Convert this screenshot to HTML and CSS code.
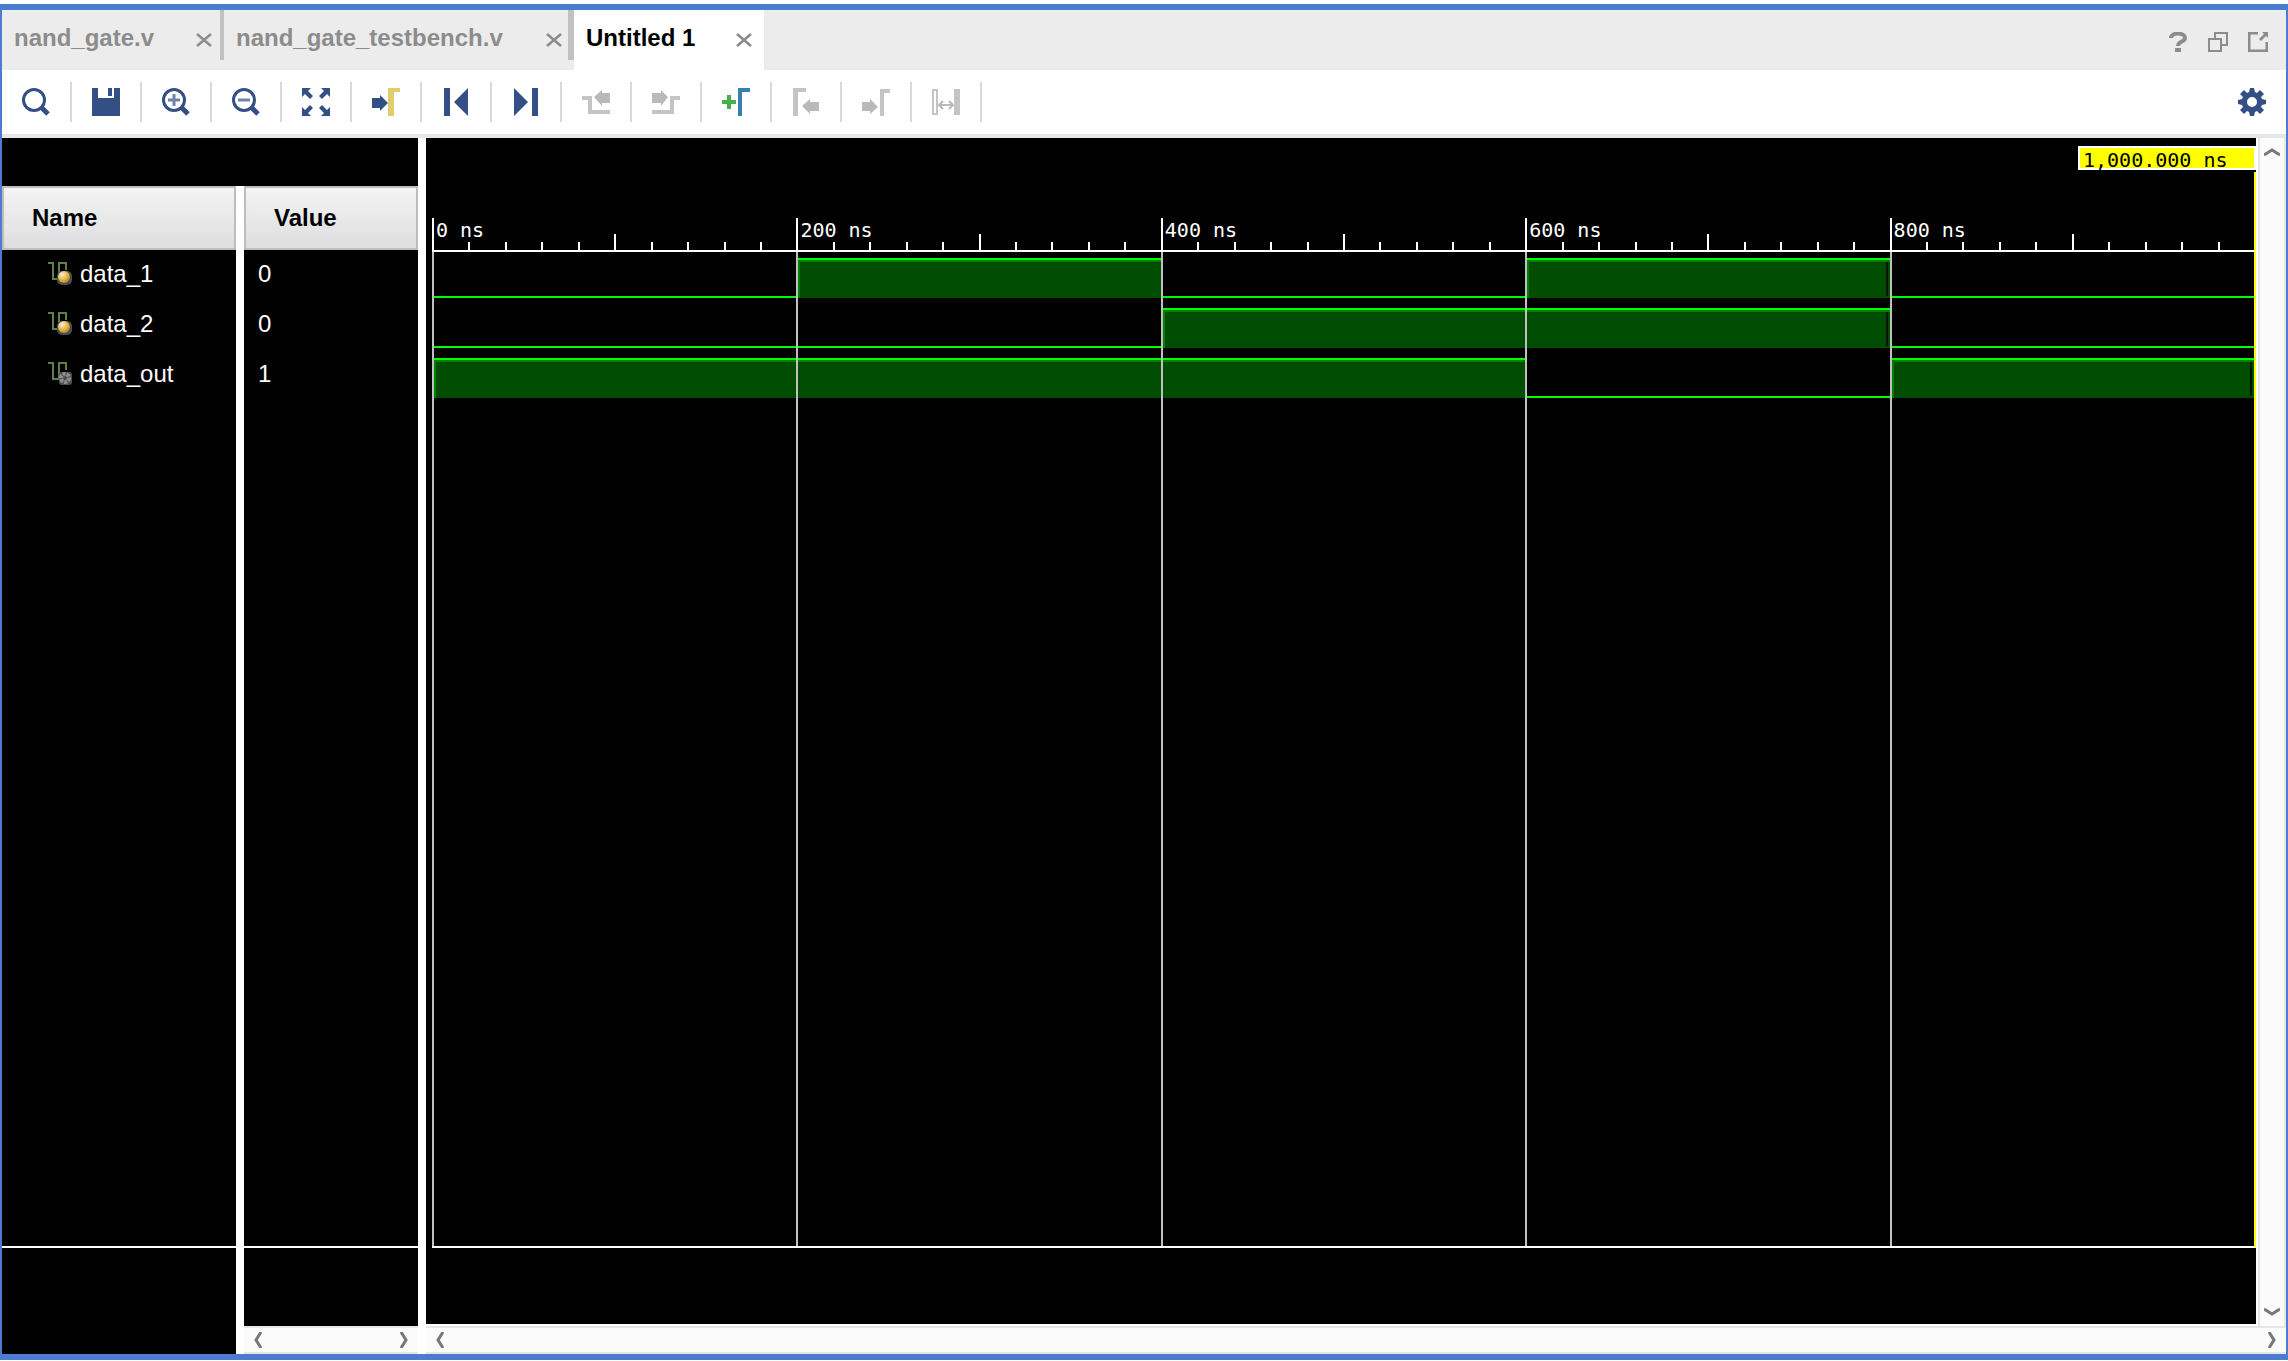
FILE: index.html
```html
<!DOCTYPE html>
<html lang="en">
<head>
  <meta charset="UTF-8">
  <meta name="viewport" content="width=device-width, initial-scale=1.0">
  <title>Untitled 1</title>
  <link rel="stylesheet" href="styles.css">
</head>
<body>
  <svg class="defs" aria-hidden="true">
    <symbol id="close" viewBox="0 0 16 16"><path d="M1 2L15 14M15 2L1 14" fill="none" stroke="#8c8c8c" stroke-width="2.6"/></symbol>
    <symbol id="signal" viewBox="0 0 24 24">
      <path d="M0 1H6M5 1V18M5 17H10M11 18V1H18V8" fill="none" stroke="#5c7f4c" stroke-width="2"/>
    </symbol>
    <symbol id="input" viewBox="0 0 24 24">
      <use href="#signal"/>
      <rect x="9" y="9" width="15" height="14" rx="5" fill="#4d4d4d"/>
      <circle cx="16" cy="15" r="6" fill="url(#gold)"/>
    </symbol>
    <symbol id="output" viewBox="0 0 24 24">
      <use href="#signal"/>
      <rect x="11" y="10" width="13" height="13" rx="3" fill="#4d4d4d"/>
      <circle cx="17" cy="16" r="4" fill="none" stroke="#8f8f8f" stroke-width="4" stroke-dasharray="3 1"/>
    </symbol>
    <symbol id="left" viewBox="0 0 8 16"><path d="M7 0L2 8L7 16" fill="none" stroke="#787878" stroke-width="3"/></symbol>
    <symbol id="right" viewBox="0 0 8 16"><path d="M1 0L6 8L1 16" fill="none" stroke="#787878" stroke-width="3"/></symbol>
    <symbol id="up" viewBox="0 0 16 8"><path d="M0 7L8 2L16 7" fill="none" stroke="#787878" stroke-width="3"/></symbol>
    <symbol id="down" viewBox="0 0 16 8"><path d="M0 1L8 6L16 1" fill="none" stroke="#787878" stroke-width="3"/></symbol>
    <radialGradient id="gold" cx="0.35" cy="0.3" r="0.8"><stop offset="0" stop-color="#f4efdc"/><stop offset="0.6" stop-color="#e3b030"/><stop offset="1" stop-color="#8f7c50"/></radialGradient>
  </svg>

  <div class="window">
    <nav class="tabs">
      <div class="tab">
        <a href="#">nand_gate.v</a>
        <button aria-label="Close nand_gate.v"><svg class="x"><use href="#close"/></svg></button>
      </div>
      <div class="tab tab-wide">
        <a href="#">nand_gate_testbench.v</a>
        <button aria-label="Close nand_gate_testbench.v"><svg class="x"><use href="#close"/></svg></button>
      </div>
      <div class="tab active">
        <a href="#">Untitled 1</a>
        <button aria-label="Close Untitled 1"><svg class="x"><use href="#close"/></svg></button>
      </div>
      <div class="window-buttons">
        <button aria-label="Help"><svg viewBox="0 0 20 20"><path d="M3 6C3 0 17 0 17 6C17 10 10 9 10 14" fill="none" stroke="#8c8c8c" stroke-width="4"/><path d="M7 16h6v4H7z" fill="#8c8c8c"/></svg></button>
        <button aria-label="Restore"><svg viewBox="0 0 20 20"><path d="M7 6V1H19V13H14M1 7H13V19H1Z" fill="none" stroke="#8c8c8c" stroke-width="2"/></svg></button>
        <button aria-label="Float"><svg viewBox="0 0 20 20"><path d="M10 1H1V19H19V10" fill="none" stroke="#8c8c8c" stroke-width="3"/><path d="M14 0H20V6L18 4L13 9L11 7L16 2Z" fill="#8c8c8c"/></svg></button>
      </div>
    </nav>

    <div class="toolbar">
      <button aria-label="Find"><svg viewBox="0 0 28 28"><circle cx="12" cy="12" r="10.5" fill="none" stroke="#334f85" stroke-width="3"/><path d="M19 19L26 26" stroke="#334f85" stroke-width="5"/></svg></button>
      <button aria-label="Save"><svg viewBox="0 0 28 28"><path d="M0 0H6V10H22V0H28V28H0ZM16 0H20V8H16Z" fill="#334f85"/></svg></button>
      <button aria-label="Zoom in"><svg viewBox="0 0 28 28"><circle cx="12" cy="12" r="10.5" fill="none" stroke="#334f85" stroke-width="3"/><path d="M19 19L26 26" stroke="#334f85" stroke-width="5"/><path d="M6 12H18M12 6V18" stroke="#6f84aa" stroke-width="3"/></svg></button>
      <button aria-label="Zoom out"><svg viewBox="0 0 28 28"><circle cx="12" cy="12" r="10.5" fill="none" stroke="#334f85" stroke-width="3"/><path d="M19 19L26 26" stroke="#334f85" stroke-width="5"/><path d="M6 12H18" stroke="#6f84aa" stroke-width="3"/></svg></button>
      <button aria-label="Zoom fit"><svg viewBox="0 0 28 28"><path id="corner" d="M0 0H9L6 3L11 8L8 11L3 6L0 9Z" fill="#334f85"/><use href="#corner" transform="rotate(90 14 14)"/><use href="#corner" transform="rotate(180 14 14)"/><use href="#corner" transform="rotate(270 14 14)"/></svg></button>
      <button aria-label="Go to cursor"><svg viewBox="0 0 28 28"><path d="M0 10H8V7L16 15L8 23V20H0Z" fill="#334f85"/><path d="M16 0H28V4H22V28H16Z" fill="#e2cd6d"/></svg></button>
      <button aria-label="Go to start"><svg viewBox="0 0 28 28"><path d="M2 0H8V28H2ZM26 0V28L12 14Z" fill="#334f85"/></svg></button>
      <button aria-label="Go to end"><svg viewBox="0 0 28 28"><path d="M2 0V28L16 14ZM20 0H26V28H20Z" fill="#334f85"/></svg></button>
      <button aria-label="Previous transition" disabled><svg viewBox="0 0 28 28"><path d="M0 8H10V22H28V26H6V12H0Z" fill="#c4c4c4"/><path d="M12 9L20 2V5H28V15H20V18Z" fill="#b9b9b9"/></svg></button>
      <button aria-label="Next transition" disabled><svg viewBox="0 0 28 28"><path d="M28 8H18V22H0V26H22V12H28Z" fill="#c4c4c4"/><path d="M16 9L9 2V5H0V15H9V18Z" fill="#b9b9b9"/></svg></button>
      <button aria-label="Add marker"><svg viewBox="0 0 28 28"><path d="M5 7H9V12H14V16H9V21H5V16H0V12H5Z" fill="#43b049"/><path d="M16 0H28V4H20V28H16Z" fill="#3a7fb1"/></svg></button>
      <button aria-label="Previous marker" disabled><svg viewBox="0 0 28 28"><path d="M1 0H14V4H6V28H1Z" fill="#c4c4c4"/><path d="M10 18L18 11V14H27V23H18V26Z" fill="#b9b9b9"/></svg></button>
      <button aria-label="Next marker" disabled><svg viewBox="0 0 28 28"><path d="M0 14H8V11L16 19L8 26V23H0Z" fill="#b9b9b9"/><path d="M18 1H28V5H22V28H18Z" fill="#c4c4c4"/></svg></button>
      <button aria-label="Swap cursors" disabled><svg viewBox="0 0 28 28"><path d="M1 2H5V26H1Z" fill="none" stroke="#c4c4c4" stroke-width="2"/><path d="M22 1H28V27H22Z" fill="#c4c4c4"/><path d="M7 17H21M11 13L7 17L11 21M17 13L21 17L17 21" fill="none" stroke="#b9b9b9" stroke-width="2"/></svg></button>
      <button class="settings" aria-label="Settings"><svg viewBox="0 0 28 28"><path d="M12 0H16L17 4L19 5L22 2L26 6L23 9L24 11L28 12V16L24 17L23 19L26 22L22 26L19 23L17 24L16 28H12L11 24L9 23L6 26L2 22L5 19L4 17L0 16V12L4 11L5 9L2 6L6 2L9 5L11 4ZM14 9A5 5 0 1 0 14 19A5 5 0 1 0 14 9Z" fill="#334f85" fill-rule="evenodd"/></svg></button>
    </div>

    <main class="viewer">
      <section class="signals">
        <div class="column names">
          <h2>Name</h2>
          <ul>
            <li><svg class="sig"><use href="#input"/></svg>data_1</li>
            <li><svg class="sig"><use href="#input"/></svg>data_2</li>
            <li><svg class="sig"><use href="#output"/></svg>data_out</li>
          </ul>
          <div class="below"></div>
        </div>
        <div class="column values">
          <h2>Value</h2>
          <ul>
            <li>0</li>
            <li>0</li>
            <li>1</li>
          </ul>
          <div class="below"></div>
          <div class="scroll-x">
            <button aria-label="Scroll values left"><svg class="arrow-x"><use href="#left"/></svg></button>
            <button aria-label="Scroll values right"><svg class="arrow-x"><use href="#right"/></svg></button>
          </div>
        </div>
      </section>

      <section class="waves">
        <div class="canvas">
          <div class="marker-row"><span class="marker">1,000.000 ns</span></div>
          <div class="ruler" id="ruler"></div>
          <div class="plot">
            <div class="wave" data-levels="01010"></div>
            <div class="wave" data-levels="00110"></div>
            <div class="wave" data-levels="11101"></div>
            <div class="grid"><i></i><i></i><i></i><i></i><i></i></div>
          </div>
          <div class="below"></div>
        </div>
        <div class="scroll-y">
          <button aria-label="Scroll up"><svg class="arrow-y"><use href="#up"/></svg></button>
          <button aria-label="Scroll down"><svg class="arrow-y"><use href="#down"/></svg></button>
        </div>
        <div class="scroll-x">
          <button aria-label="Scroll left"><svg class="arrow-x"><use href="#left"/></svg></button>
          <button aria-label="Scroll right"><svg class="arrow-x"><use href="#right"/></svg></button>
        </div>
      </section>
    </main>
  </div>

  <script src="script.js"></script>
</body>
</html>
```
FILE: styles.css
```css
* {
  box-sizing: border-box;
}

body {
  margin: 0;
  padding: 4px 0 1px;
  height: 100vh;
  background-color: #fff;
  color: #000;
  font-family: "Liberation Sans", Arial, sans-serif;
  font-size: 24px;
  line-height: 30px;
}

h2, ul {
  margin: 0;
  padding: 0;
  list-style: none;
}

button {
  display: flex;
  align-items: center;
  justify-content: center;
  padding: 0;
  border: none;
  background: none;
}

svg {
  display: block;
}

.defs {
  position: absolute;
  width: 0;
  height: 0;
}

.window {
  display: flex;
  flex-direction: column;
  height: 100%;
  border: 2px solid #4a7dce;
  border-width: 6px 2px;
}

/* tabs */
.tabs {
  display: flex;
  height: 60px;
  background-color: #ececec;
}

.tab {
  display: flex;
  justify-content: space-between;
  width: 222px;
  height: 50px;
  padding: 0 8px 0 12px;
  border-right: 4px solid #c1c1c1;
}

.tab-wide {
  width: 350px;
  padding-right: 6px;
  border-right-width: 6px;
}

.tab a {
  padding-top: 13px;
  color: #8c8c8c;
  font-weight: bold;
  line-height: 30px;
  text-decoration: none;
}

.tab button {
  height: 50px;
  padding-top: 10px;
}

.tab.active {
  width: 190px;
  height: 60px;
  padding-right: 12px;
  border-right: none;
  background-color: #fff;
}

.tab.active a {
  color: #000;
}

.x {
  width: 16px;
  height: 16px;
}

.window-buttons {
  display: flex;
  gap: 20px;
  margin-left: auto;
  padding: 4px 18px 0 0;
}

.window-buttons svg {
  width: 20px;
  height: 20px;
}

/* toolbar */
.toolbar {
  display: flex;
  align-items: center;
  height: 68px;
  border-bottom: 4px solid #e6e6e6;
}

.toolbar button {
  width: 70px;
  height: 40px;
  border-right: 2px solid #d8d8d8;
}

.toolbar svg {
  width: 28px;
  height: 28px;
}

.toolbar .settings {
  margin-left: auto;
  width: 68px;
  border-right: none;
}

/* signal list */
.viewer {
  display: flex;
  flex: 1;
  gap: 8px;
  min-height: 0;
}

.signals {
  display: flex;
  width: 416px;
  padding-top: 48px;
  background: linear-gradient(#000 48px, #fff 48px);
  gap: 8px;
}

.column {
  display: flex;
  flex-direction: column;
  width: 234px;
  background-color: #000;
  color: #fff;
}

.values {
  width: 174px;
}

.column h2 {
  height: 64px;
  padding-left: 28px;
  border: 2px solid #bdbdbd;
  background: linear-gradient(#f4f4f4, #dedee0);
  color: #000;
  font-size: 24px;
  line-height: 60px;
}

.column ul {
  flex: 1;
  border-bottom: 2px solid #fff;
}

.column li {
  display: flex;
  align-items: center;
  gap: 8px;
  height: 50px;
  padding: 0 0 2px 46px;
}

.column.values li {
  padding-left: 14px;
}

.sig {
  width: 24px;
  height: 24px;
}

.below {
  height: 106px;
  background-color: #000;
}

.values .below {
  height: 78px;
}

/* waveform */
.waves {
  display: grid;
  flex: 1;
  grid-template-columns: 1fr 28px;
  grid-template-rows: 1fr 28px;
  min-width: 0;
}

.canvas {
  display: flex;
  flex-direction: column;
  margin: 0 2px 2px 0;
  padding-left: 6px;
  background-color: #000;
  color: #fff;
  font-family: "DejaVu Sans Mono", monospace;
  font-size: 20px;
}

.canvas .below {
  height: 76px;
}

.marker-row {
  display: flex;
  justify-content: flex-end;
  height: 34px;
  padding-top: 8px;
}

.marker {
  width: 178px;
  height: 24px;
  padding-left: 3px;
  border: 2px solid #fff;
  background-color: #ff0;
  color: #000;
  line-height: 24px;
}

.ruler {
  display: grid;
  grid-template-columns: repeat(50, minmax(0, 1fr));
  align-items: end;
  height: 80px;
  border-bottom: 2px solid #fff;
  border-right: 2px solid #ff0;
}

.tick {
  height: 8px;
  border-left: 2px solid #fff;
}

.tick.half {
  height: 16px;
}

.tick.major {
  height: 32px;
  padding-left: 2px;
  line-height: 24px;
  white-space: nowrap;
}

.plot {
  position: relative;
  flex: 1;
  border-right: 2px solid #ff0;
  border-bottom: 2px solid #fff;
}

.wave {
  display: flex;
  height: 50px;
  padding: 6px 0 4px;
}

.low {
  border-bottom: 2px solid #0f0;
}

.high {
  border-top: 2px solid #0f0;
  background-color: #004c00;
  box-shadow: inset 4px 2px #008000;
}

/* dark edge where a pulse closes in the last steps */
.high.closed {
  display: flex;
  justify-content: flex-end;
  padding: 2px 2px 2px 0;
}

.high.closed::after {
  content: "";
  width: 2px;
  background-color: #001400;
}

/* grid lines run over the waves */
.grid {
  position: absolute;
  inset: 0;
  display: grid;
  grid-template-columns: repeat(5, 1fr);
}

.grid i {
  border-left: 2px solid #c0c0c0;
}

/* scroll bars */
.scroll-x {
  display: flex;
  justify-content: space-between;
  grid-column: 1 / 3;
  height: 28px;
  padding: 0 10px;
  border: 2px solid #e6e6e6;
  border-width: 2px 0;
  background-color: #fbfbfb;
}

.scroll-y {
  display: flex;
  flex-direction: column;
  justify-content: space-between;
  padding: 10px 0;
  border: 2px solid #e6e6e6;
  border-width: 0 2px;
  background-color: #fbfbfb;
}

.scroll-y button {
  width: 24px;
}

.arrow-x {
  width: 8px;
  height: 16px;
}

.arrow-y {
  width: 16px;
  height: 8px;
}
```
FILE: script.js
```js
const ruler = document.getElementById("ruler");

for (let i = 0; i < 50; i++) {
  const tick = document.createElement("div");
  tick.className = "tick";
  if (i % 10 === 0) {
    tick.classList.add("major");
    tick.textContent = i * 20 + " ns";
  } else if (i % 5 === 0) {
    tick.classList.add("half");
  }
  ruler.appendChild(tick);
}

// each digit is one 200 ns step, equal neighbours are merged into one block
document.querySelectorAll(".wave").forEach((wave) => {
  let end = 0;
  wave.dataset.levels.match(/0+|1+/g).forEach((run) => {
    const part = document.createElement("div");
    end += run.length;
    part.className = run[0] === "1" ? "high" : "low";
    if (end > 3) {
      part.classList.add("closed");
    }
    part.style.width = run.length * 20 + "%";
    wave.appendChild(part);
  });
});
```
